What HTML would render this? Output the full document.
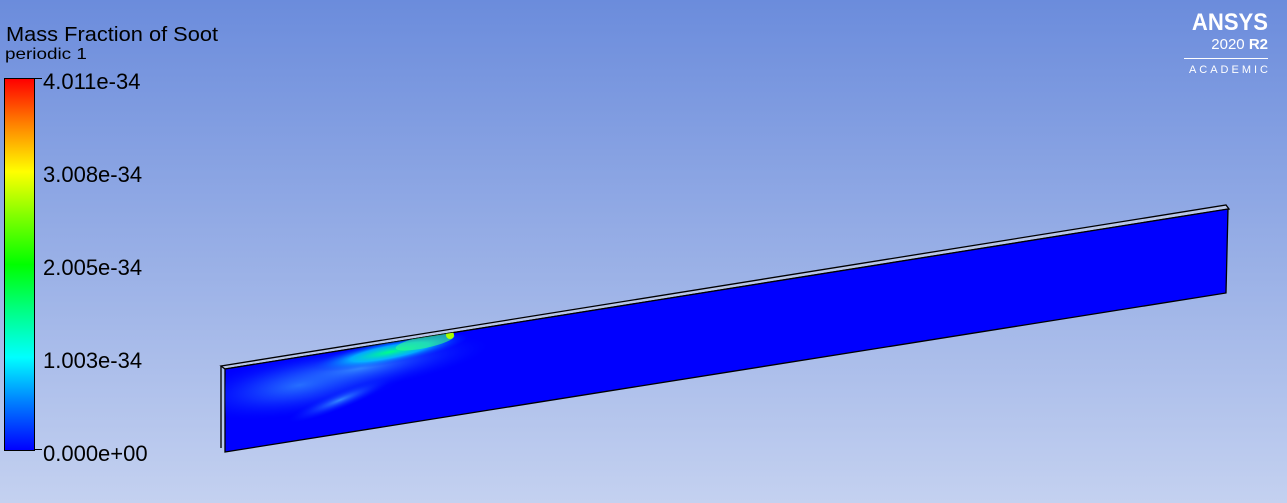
<!DOCTYPE html>
<html><head><style>
body{margin:0;width:1287px;height:503px;overflow:hidden;background:linear-gradient(#6b8cdc,#c4d1f0);font-family:"Liberation Sans",sans-serif;position:relative}
.t{position:absolute;color:#000;transform-origin:0 0;white-space:nowrap}
.l{position:absolute;left:43px;font-size:22px;line-height:22px;white-space:nowrap}
</style></head><body>
<div class="t" style="left:6px;top:24px;font-size:20px;transform:scaleX(1.09)">Mass Fraction of Soot</div>
<div class="t" style="left:5px;top:46px;font-size:16px;transform:scaleX(1.18)">periodic 1</div>
<div style="position:absolute;left:4px;top:78px;width:29px;height:371px;border:1px solid #000;background:linear-gradient(#ff0000,#ff8000 12%,#ffff00 25%,#80ff00 37%,#00ff00 50%,#00ff80 62%,#00ffff 75%,#0080ff 87%,#0000ff)"></div>
<div style="position:absolute;left:34px;top:78px;width:8px;height:1px;background:#000"></div>
<div style="position:absolute;left:34px;top:449px;width:8px;height:1px;background:#000"></div>
<div class="l" style="top:71px">4.011e-34</div>
<div class="l" style="top:164px">3.008e-34</div>
<div class="l" style="top:257px">2.005e-34</div>
<div class="l" style="top:350px">1.003e-34</div>
<div class="l" style="top:443px">0.000e+00</div>
<div style="position:absolute;right:19px;top:10px;color:#fff;text-align:right">
<div style="font-size:24px;font-weight:bold;line-height:26px;transform:scaleX(0.92);transform-origin:100% 0">ANSYS</div>
<div style="font-size:15px;line-height:17px">2020 <b>R2</b></div>
<div style="width:84px;height:1px;background:#fff;margin:5px 0 5px auto"></div>
<div style="font-size:11px;letter-spacing:3px;margin-right:-3px">ACADEMIC</div>
</div>
<svg width="1287" height="503" style="position:absolute;left:0;top:0">
<defs>
<radialGradient id="g1" cx="0.5" cy="0.5" r="0.5"><stop offset="0" stop-color="#00ff88"/><stop offset="0.5" stop-color="#00ccff" stop-opacity="0.8"/><stop offset="1" stop-color="#0033ff" stop-opacity="0"/></radialGradient>
<radialGradient id="g2" cx="0.5" cy="0.5" r="0.5"><stop offset="0" stop-color="#3388ff"/><stop offset="1" stop-color="#0020ff" stop-opacity="0"/></radialGradient>
<clipPath id="c"><polygon points="225,369 1228,209 1226,293 225,452"/></clipPath>
</defs>
<polygon points="221,366 1226,205 1229,209 225,369" fill="#b8c6ea" stroke="#000" stroke-width="1.3"/>
<polygon points="225,369 1228,209 1226,293 225,452" fill="#0000ff" stroke="#000" stroke-width="1.3"/>
<line x1="221" y1="366" x2="221" y2="448" stroke="#000" stroke-width="1.3"/>
<g clip-path="url(#c)">
<ellipse cx="300" cy="385" rx="110" ry="30" fill="url(#g2)" transform="rotate(-9 300 385)"/>
<ellipse cx="360" cy="368" rx="130" ry="22" fill="url(#g2)" transform="rotate(-10 360 368)"/>
<ellipse cx="340" cy="400" rx="55" ry="9" fill="url(#g2)" transform="rotate(-22 340 400)"/>
<ellipse cx="390" cy="352" rx="80" ry="12" fill="url(#g1)" transform="rotate(-11 390 352)"/>
<ellipse cx="425" cy="342" rx="30" ry="6" fill="#33ff88" opacity="0.6" transform="rotate(-12 425 342)"/>
<circle cx="450" cy="335" r="4" fill="#aaff00"/>
</g>
</svg>
</body></html>
